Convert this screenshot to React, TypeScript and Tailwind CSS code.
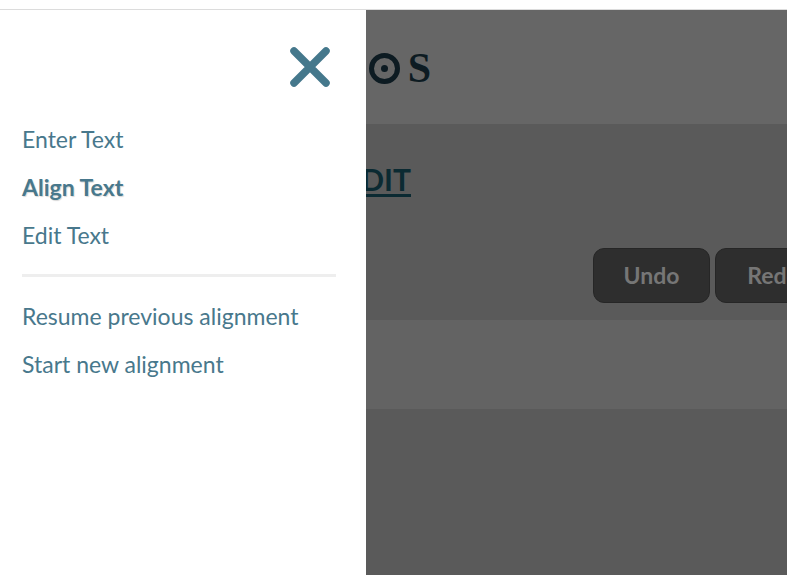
import React from "react";

function CloseIcon() {
  return (
    <svg width="40" height="40" viewBox="0 0 40 40" className="block">
      <path d="M4 4 L36 36 M36 4 L4 36" stroke="#45788c" strokeWidth="7.5" strokeLinecap="round" />
    </svg>
  );
}

export default function App() {
  const font = { fontFamily: "Lato, 'Noto Sans', sans-serif" };
  return (
    <div className="relative w-[787px] h-[575px] overflow-hidden bg-white" style={font}>
      <div className="h-[10px] border-b border-[#dcdcdc] bg-white" />
      {/* page under overlay */}
      <div className="flex flex-col h-[565px]">
        <div className="h-[114px] bg-[#666666] shrink-0">
          <div className="w-[431px] h-full flex items-center justify-end pt-[2px]">
            <div className="flex items-center gap-[8px] text-[42px] text-[#0d1b22] font-bold leading-none" style={{ fontFamily: "'Liberation Serif', serif" }}>
              <span>ALPHEI</span>
              <span className="w-[31px] h-[31px] rounded-full border-[5px] border-[#0d1b22] flex items-center justify-center shrink-0">
                <span className="w-[7px] h-[7px] rounded-full bg-[#0d1b22]" />
              </span>
              <span>S</span>
            </div>
          </div>
        </div>
        <div className="h-[196px] bg-[#5a5a5a] flex flex-col shrink-0">
          <div className="h-[70px] flex items-end w-[411px] justify-end">
            <span className="text-[30px] font-bold text-[#0b2a32] underline underline-offset-[3px] decoration-[3px] leading-none">AUTO EDIT</span>
          </div>
          <div className="flex gap-[5px] pl-[593px] pt-[54px]">
            <div className="shrink-0 w-[117px] h-[55px] rounded-[11px] bg-[#2e2e2e] border border-[#262626] flex items-center justify-center text-[23px] font-bold text-[#767676]">Undo</div>
            <div className="shrink-0 w-[117px] h-[55px] rounded-[11px] bg-[#2e2e2e] border border-[#262626] flex items-center justify-center text-[23px] font-bold text-[#767676]">Redo</div>
          </div>
        </div>
        <div className="h-[89px] bg-[#636363] shrink-0" />
        <div className="flex-1 bg-[#5a5a5a]" />
      </div>
      {/* drawer */}
      <div className="absolute left-0 top-[10px] bottom-0 w-[366px] bg-white">
        <div className="flex justify-end pr-[36px] pt-[37px]">
          <CloseIcon />
        </div>
        <div className="flex flex-col px-[22px] pt-[28px] text-[23px] text-[#48788c]">
          <div className="h-[48px] flex items-center">Enter Text</div>
          <div className="h-[48px] flex items-center font-bold" style={{ textShadow: "1px 1px 1px #d8d8d8" }}>Align Text</div>
          <div className="h-[48px] flex items-center">Edit Text</div>
          <div className="h-[3px] bg-[#eeeeee] w-[314px] mt-[15px] mb-[15px]" />
          <div className="h-[48px] flex items-center">Resume previous alignment</div>
          <div className="h-[48px] flex items-center">Start new alignment</div>
        </div>
      </div>
    </div>
  );
}
